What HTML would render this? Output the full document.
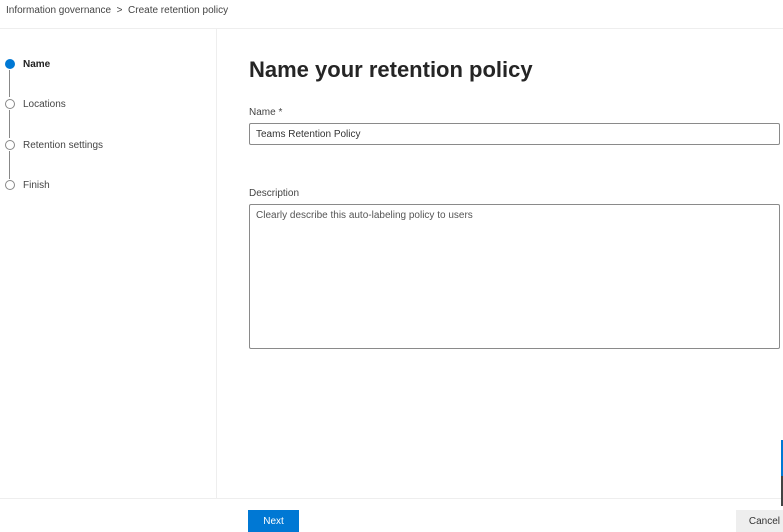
<!DOCTYPE html>
<html><head><style>
*{margin:0;padding:0;box-sizing:border-box}
body{width:783px;height:532px;overflow:hidden;background:#fff;font-family:"Liberation Sans",sans-serif;color:#323130;position:relative;font-size:10px}
.a{position:absolute}
</style></head><body>
<div class="a" style="left:6px;top:5px;font-size:10px;color:#444">Information governance &nbsp;&gt;&nbsp; Create retention policy</div>
<div class="a" style="left:0;top:28px;width:783px;height:1px;background:#eee"></div>
<div class="a" style="left:216px;top:29px;width:1px;height:469px;background:#eee"></div>
<div class="a" style="left:0;top:498px;width:783px;height:1px;background:#eee"></div>
<div class="a" style="left:9px;top:70px;width:1px;height:27px;background:#888"></div>
<div class="a" style="left:9px;top:110px;width:1px;height:28px;background:#888"></div>
<div class="a" style="left:9px;top:151px;width:1px;height:28px;background:#888"></div>
<div class="a" style="left:5px;top:59px;width:10px;height:10px;border-radius:50%;background:#0078d4"></div>
<div class="a" style="left:5px;top:99px;width:10px;height:10px;border-radius:50%;border:1px solid #888"></div>
<div class="a" style="left:5px;top:140px;width:10px;height:10px;border-radius:50%;border:1px solid #888"></div>
<div class="a" style="left:5px;top:180px;width:10px;height:10px;border-radius:50%;border:1px solid #888"></div>
<div class="a" style="left:23px;top:59px;font-weight:bold;color:#222">Name</div>
<div class="a" style="left:23px;top:99px;color:#444">Locations</div>
<div class="a" style="left:23px;top:140px;color:#444">Retention settings</div>
<div class="a" style="left:23px;top:180px;color:#444">Finish</div>
<div class="a" style="left:249px;top:57px;font-size:22px;font-weight:bold;color:#252525">Name your retention policy</div>
<div class="a" style="left:249px;top:107px;color:#444">Name *</div>
<div class="a" style="left:249px;top:123px;width:531px;height:22px;border:1px solid #8a8a8a;border-radius:2px;padding:5px 6px;color:#333">Teams Retention Policy</div>
<div class="a" style="left:249px;top:188px;color:#444">Description</div>
<div class="a" style="left:249px;top:204px;width:531px;height:145px;border:1px solid #8a8a8a;border-radius:2px;padding:5px 6px;color:#555">Clearly describe this auto-labeling policy to users</div>
<div class="a" style="left:248px;top:510px;width:51px;height:22px;background:#0078d4;color:#fff;text-align:center;padding-top:6px">Next</div>
<div class="a" style="left:736px;top:510px;width:47px;height:22px;background:#eee;color:#333;text-align:right;padding-right:3px;padding-top:6px">Cancel</div>
<div class="a" style="left:781px;top:440px;width:2px;height:36px;background:#0078d4"></div>
<div class="a" style="left:781px;top:476px;width:2px;height:30px;background:#444"></div>
</body></html>
